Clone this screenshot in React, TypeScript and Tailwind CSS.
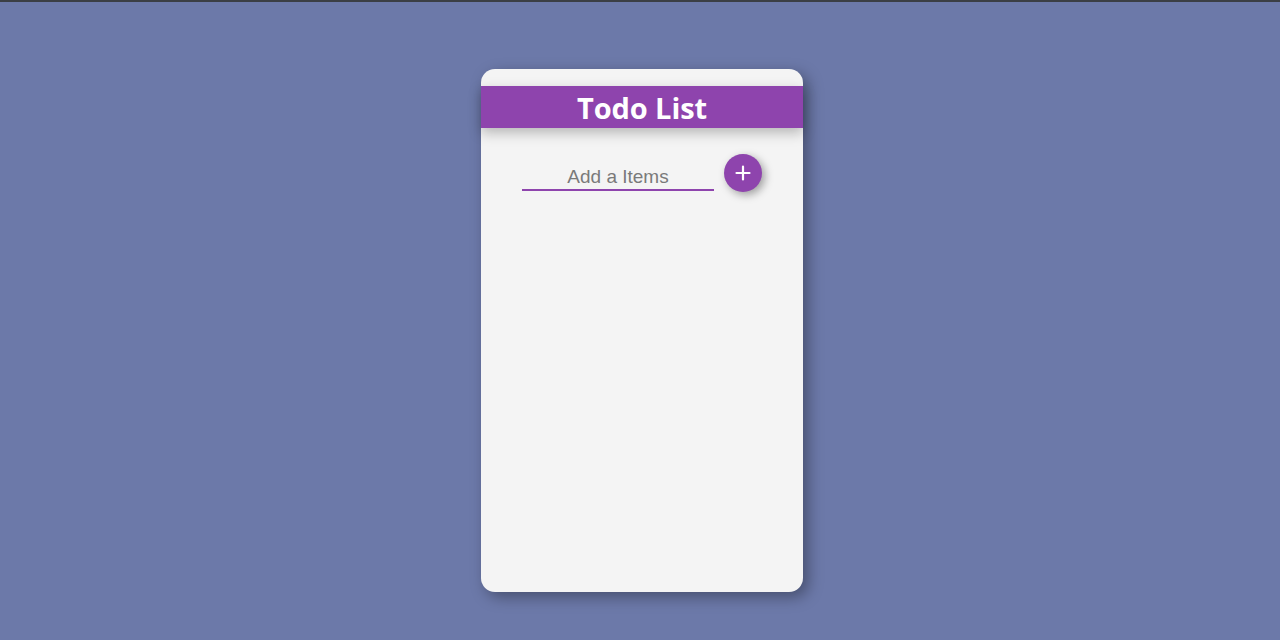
import React, { useState } from 'react';

export default function App() {
  const [item, setItem] = useState('');

  return (
    <div className="min-h-screen w-full bg-[#6c79a9] border-t-2 border-[#3b3f45] flex justify-center pt-[67px] pl-[4px]">
      <div className="w-[322px] h-[523px] bg-[#f4f4f4] rounded-[14px] shadow-[5px_5px_15px_rgba(0,0,0,0.35)] pt-[17px] flex flex-col">
        <div className="h-[42px] bg-[#8e44ad] shadow-[0_5px_12px_rgba(0,0,0,0.25)] flex items-center justify-center">
          <h1 className="text-white text-[29px] font-bold font-['Open_Sans',sans-serif] leading-none tracking-[-0.1px]">
            Todo List
          </h1>
        </div>

        <div className="flex items-center justify-center gap-[10px] mt-[26px]">
          <input
            type="text"
            value={item}
            onChange={(e) => setItem(e.target.value)}
            placeholder="Add a Items"
            className="w-[192px] h-[28px] mt-[7px] pt-[4px] bg-transparent border-b-2 border-[#8e44ad] text-center text-[19px] text-[#333] placeholder:text-[#7a7a7a] font-['Liberation_Sans',Arial,sans-serif] outline-none"
          />
          <button className="w-[38px] h-[38px] rounded-full bg-[#8e44ad] flex items-center justify-center shadow-[3px_3px_8px_rgba(0,0,0,0.35)]">
            <svg width="16" height="16" viewBox="0 0 16 16">
              <path d="M8 1.5v13M1.5 8h13" stroke="white" strokeWidth="2.2" strokeLinecap="round" />
            </svg>
          </button>
        </div>

        <ul className="flex-1"></ul>
      </div>
    </div>
  );
}
